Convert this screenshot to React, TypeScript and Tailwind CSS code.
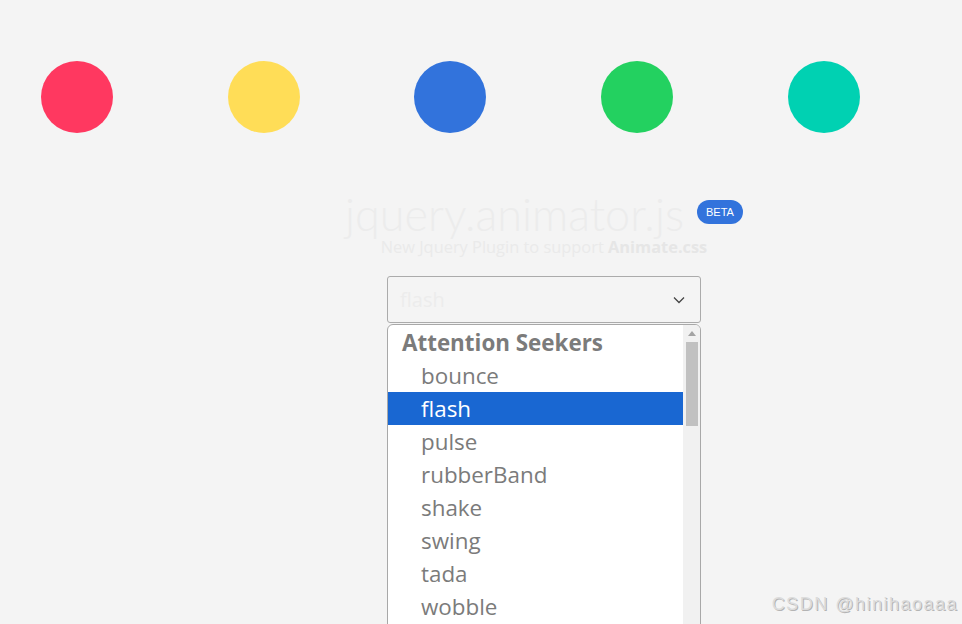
import React from "react";

const groups: { label: string; items: string[] }[] = [
  {
    label: "Attention Seekers",
    items: ["bounce", "flash", "pulse", "rubberBand", "shake", "swing", "tada", "wobble", "jello"],
  },
];

export default function App() {
  const circles = ["bg-[#ff3860]", "bg-[#ffdd57]", "bg-[#3273dc]", "bg-[#23d160]", "bg-[#00d1b2]"];
  return (
    <div className="relative h-[624px] w-[962px] overflow-hidden bg-[#f4f4f4] font-['Open_Sans',sans-serif]">
      <div className="flex gap-[114.7px] pl-[41px] pt-[61px]">
        {circles.map((c, i) => (
          <div key={i} className={`h-[72px] w-[72px] rounded-full ${c}`} />
        ))}
      </div>

      <div className="ml-[244px] mt-[56px] flex w-[600px] flex-col items-center">
        <div className="flex items-center gap-[13px]">
          <span className="font-['Lato',sans-serif] text-[45px] font-light leading-[50px] text-[#ececec]">
            jquery.animator.js
          </span>
          <span className="mt-[-4px] rounded-full bg-[#3273dc] px-[9px] py-[4px] font-['Liberation_Sans',sans-serif] text-[11px] leading-[16px] text-white">
            BETA
          </span>
        </div>
        <div className="text-[16.4px] leading-[16px] text-[#eaeaea]">
          New Jquery Plugin to support <span className="font-bold text-[#e6e6e6]">Animate.css</span>
        </div>
      </div>

      <div className="ml-[387px] mt-[21px] w-[314px]">
        <div className="flex h-[47px] items-center justify-between rounded-[3px] border border-[#ababab] bg-[#f4f4f4] pl-[12px] pr-[14px]">
          <span className="text-[20px] text-[#ececec]">flash</span>
          <svg width="12" height="8" viewBox="0 0 12 8" className="mr-[1px]">
            <path d="M1 1.5 L6 6.5 L11 1.5" fill="none" stroke="#444" strokeWidth="1.3" />
          </svg>
        </div>
        <div className="mt-[1px] flex h-[320px] overflow-hidden rounded-t-[6px] border border-[#a8a8a8] bg-white">
          <div className="flex-1 pt-[1px]">
            {groups.map((g) => (
              <div key={g.label}>
                <div className="h-[33px] pl-[14px] text-[22.4px] font-bold leading-[33px] text-[#7b7b7b]">
                  {g.label}
                </div>
                {g.items.map((it) => (
                  <div
                    key={it}
                    className={
                      it === "flash"
                        ? "h-[33px] bg-[#1967d2] pl-[33px] text-[22.4px] leading-[33px] text-white"
                        : "h-[33px] pl-[33px] text-[22.4px] leading-[33px] text-[#7b7b7b]"
                    }
                  >
                    {it}
                  </div>
                ))}
              </div>
            ))}
          </div>
          <div className="flex w-[17px] flex-col items-center bg-[#f1f1f1]">
            <svg width="8" height="5" viewBox="0 0 8 5" className="mt-[6px]">
              <path d="M0 5 L4 0 L8 5 Z" fill="#a3a3a3" />
            </svg>
            <div className="mt-[6px] h-[84px] w-[12px] bg-[#c1c1c1]" />
          </div>
        </div>
      </div>

      <div className="absolute bottom-[6px] right-[4px] font-['Liberation_Sans',sans-serif] text-[18px] tracking-[1.5px] text-[#dcdcdc] [text-shadow:1px_1px_0_#b4b4b4]">
        CSDN @hinihaoaaa
      </div>
    </div>
  );
}
